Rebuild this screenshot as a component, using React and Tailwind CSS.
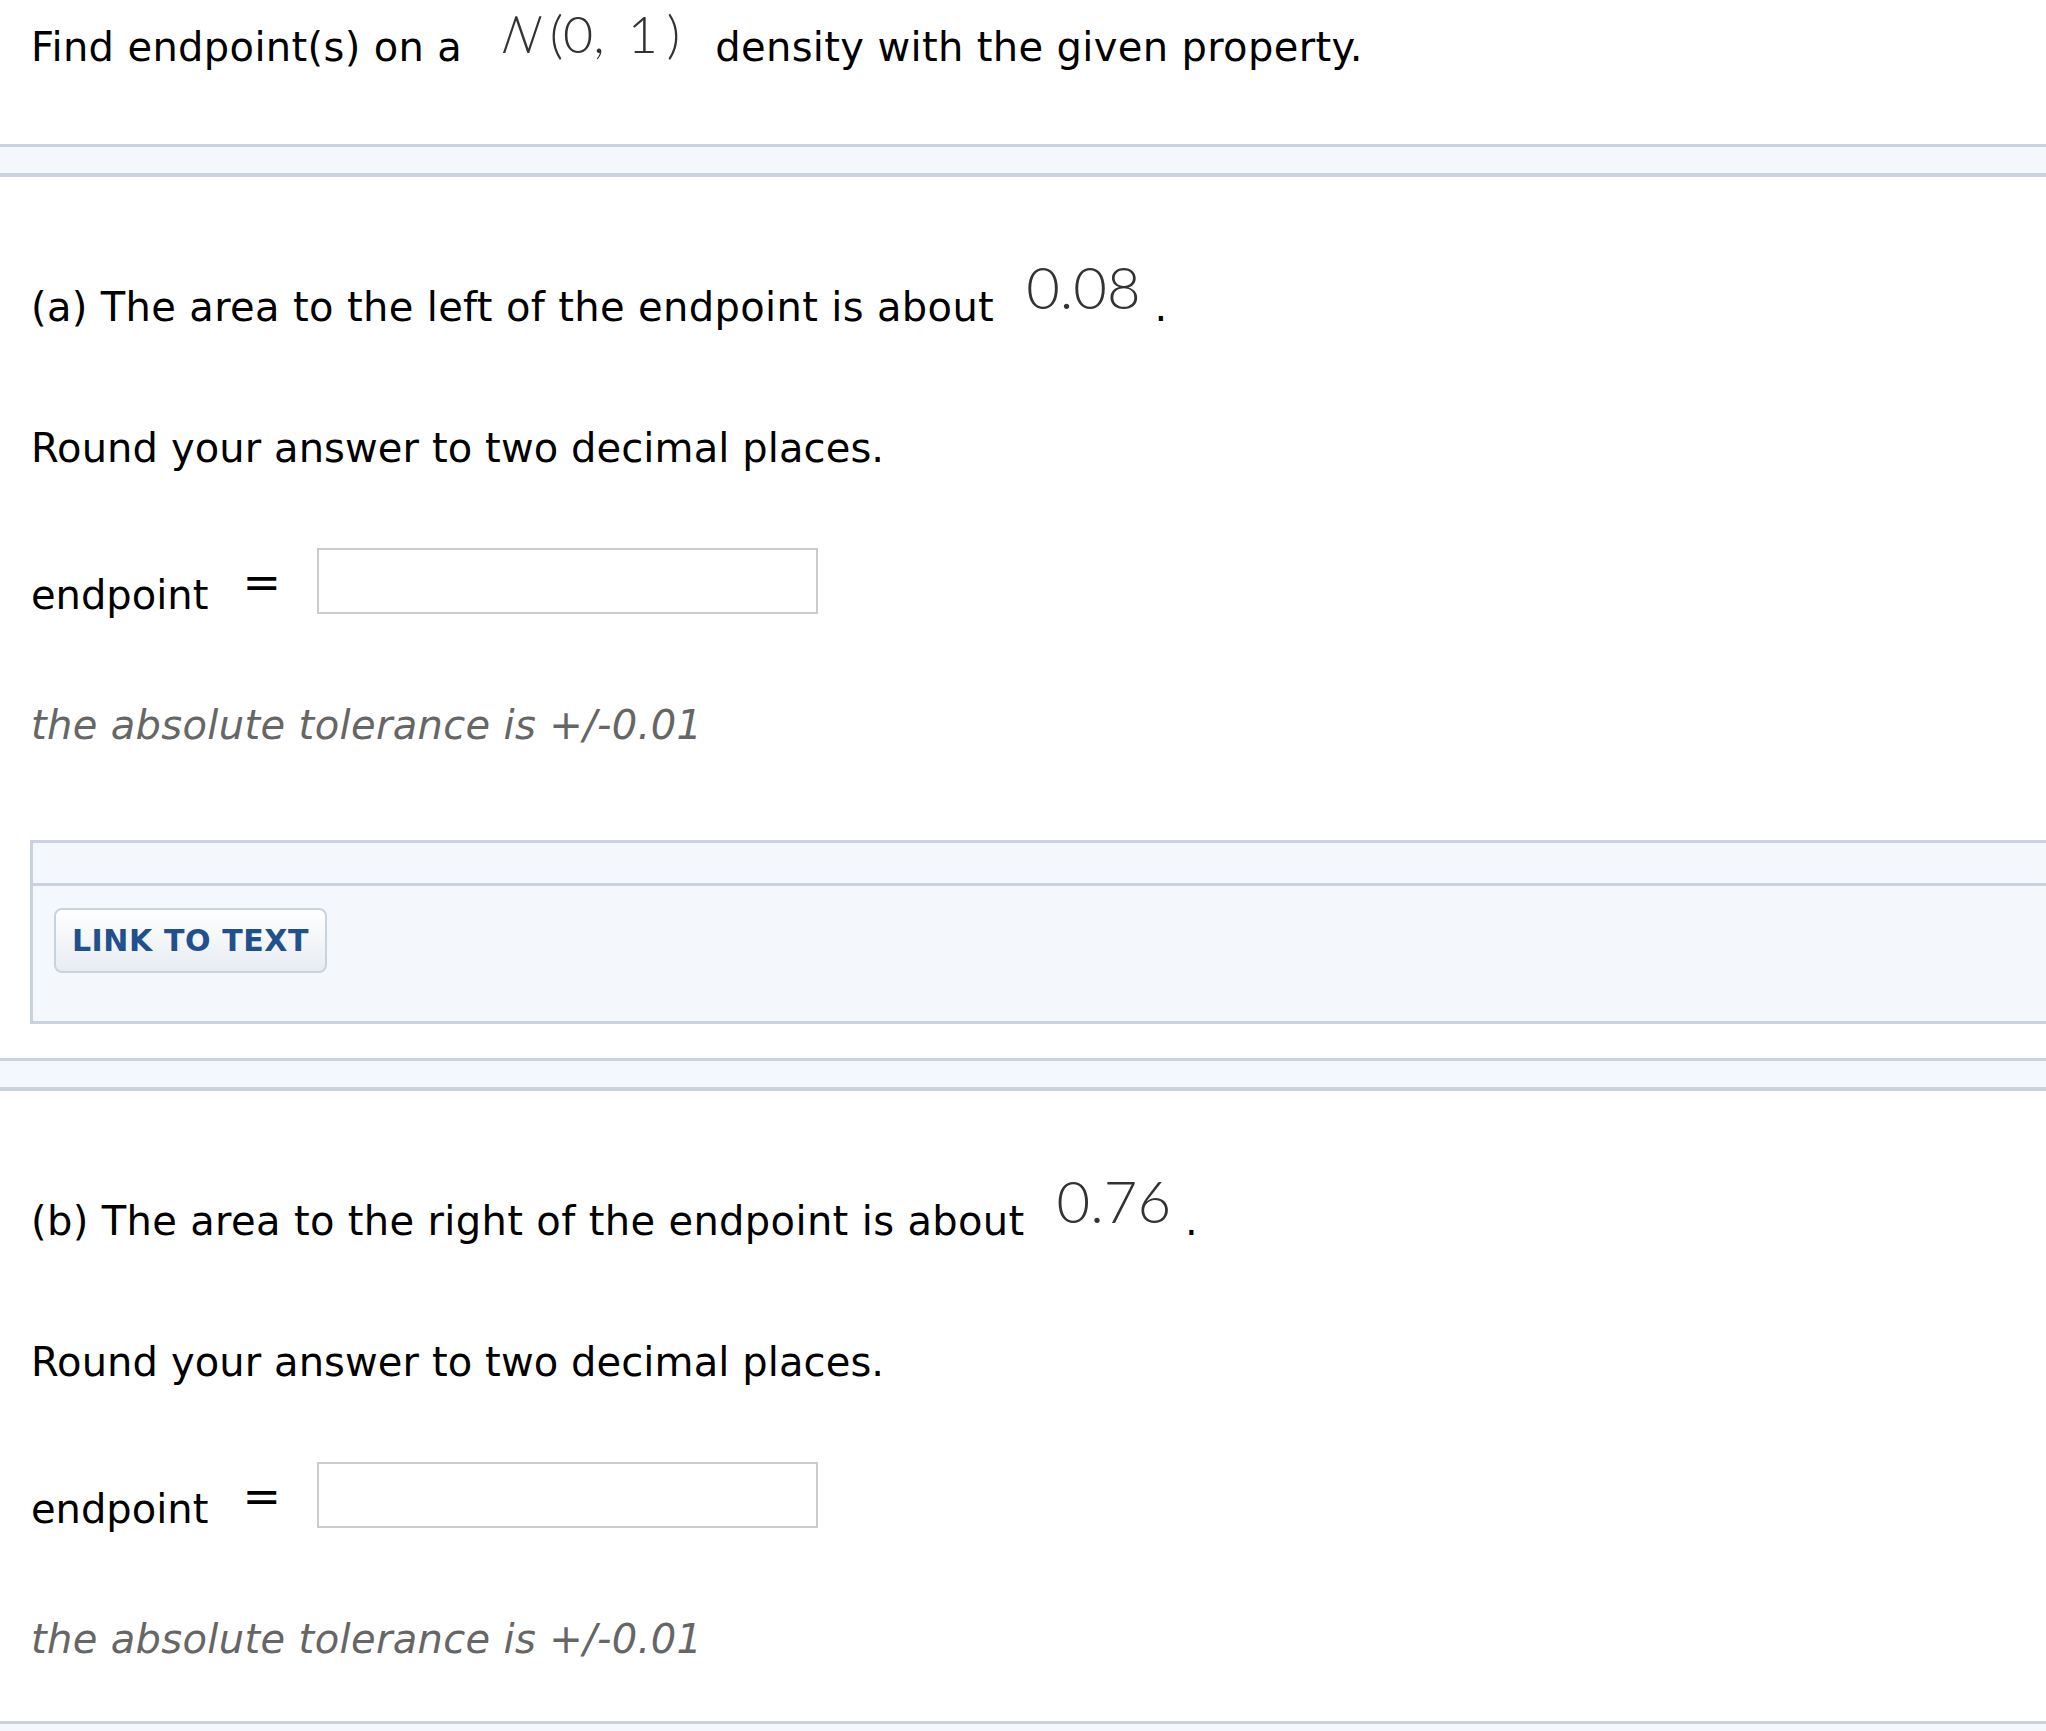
import React from "react";

function Band({ className }) {
  return (
    <div
      className={
        "h-[33px] border-t-[3px] border-b-[4px] border-[#c9d2de] bg-[#f4f7fb] " +
        className
      }
    />
  );
}

function EndpointRow({ className }) {
  return (
    <div className={"flex items-start h-[66px] pl-[31px] " + className}>
      <span className="mt-[23px] leading-[48px] tracking-normal">endpoint</span>
      <span className="ml-[34px] mt-[10px] text-[46px] leading-[48px]">=</span>
      <input
        type="text"
        readOnly
        className="ml-[36px] w-[501px] h-[66px] border-2 border-[#cccccc] bg-white outline-none"
      />
    </div>
  );
}

function Tolerance({ className }) {
  return (
    <div className={"pl-[31px] italic text-[#666666] whitespace-nowrap " + className}>
      the absolute tolerance is +/-0.01
    </div>
  );
}

function Part({ label, value }) {
  return (
    <>
      <div className="mt-[106px] pl-[31px] flex items-start whitespace-nowrap">
        <span>{label}</span>
        <span className="ml-[32px] -mt-[25px] tracking-normal font-['Lato',sans-serif] font-light text-[58px] leading-[58px] text-[#333333]">
          {value}
        </span>
        <span className="ml-[14px]">.</span>
      </div>
      <div className="mt-[93px] pl-[31px] whitespace-nowrap tracking-[0.1px]">
        Round your answer to two decimal places.
      </div>
    </>
  );
}

export default function App() {
  return (
    <div className="w-[2046px] h-[1731px] overflow-hidden bg-white font-['DejaVu_Sans',sans-serif] text-[40px] leading-[48px] tracking-[0.35px] text-black">
      <div className="pt-[23px] pl-[31px] flex items-start whitespace-nowrap">
        <span>Find endpoint(s) on a</span>
        <span className="ml-[42px] mr-[35px] -mt-[16px] tracking-normal font-['Lato',sans-serif] font-light text-[52px] leading-[52px] text-[#333333]">
          <i className="inline-block -skew-x-12">N</i>
          <span className="ml-[9px]">(0,</span>
          <span className="ml-[23px]">1</span>
          <span className="ml-[9px]">)</span>
        </span>
        <span>density with the given property.</span>
      </div>

      <Band className="mt-[73px]" />

      <Part label="(a) The area to the left of the endpoint is about" value="0.08" />
      <EndpointRow className="mt-[76px]" />
      <Tolerance className="mt-[87px]" />

      <div className="mt-[91px] ml-[30px] border-l-[3px] border-t-[3px] border-b-[3px] border-[#c9d2de] bg-[#f4f7fb]">
        <div className="h-[43px] border-b-[3px] border-[#c9d2de]" />
        <div className="pt-[22px] pb-[48px] pl-[21px]">
          <button
            type="button"
            className="block w-[273px] h-[65px] rounded-[8px] border-2 border-[#c9d3de] bg-linear-to-b from-white to-[#e8ecf1] text-[30px] leading-none font-bold tracking-[0.6px] text-[#21508f]"
          >
            LINK TO TEXT
          </button>
        </div>
      </div>

      <Band className="mt-[34px]" />

      <Part label="(b) The area to the right of the endpoint is about" value="0.76" />
      <EndpointRow className="mt-[76px]" />
      <Tolerance className="mt-[87px]" />

      <Band className="mt-[58px]" />
    </div>
  );
}
